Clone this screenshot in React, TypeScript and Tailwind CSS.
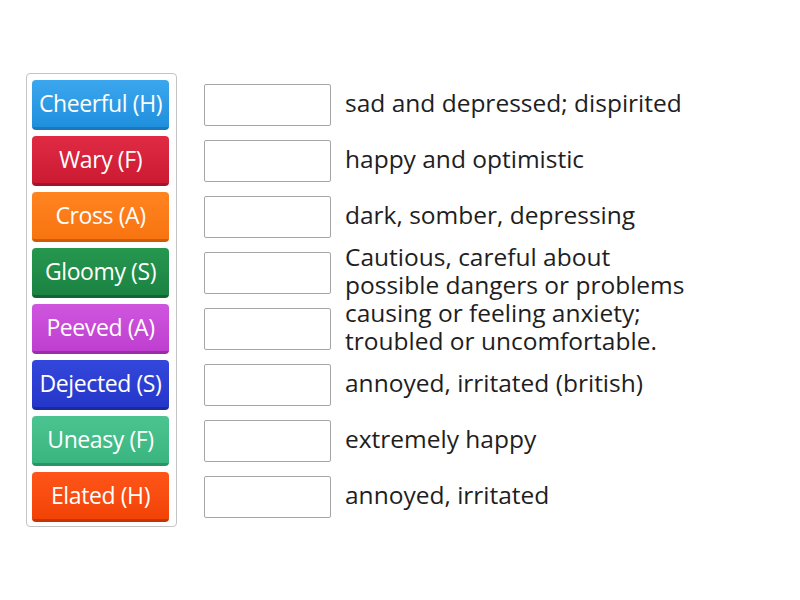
const cards = [
  { label: 'Cheerful (H)', cls: 'bg-gradient-to-b from-[#3ba7ee] to-[#1f8fdd] border-b-[#1a78bd]' },
  { label: 'Wary (F)', cls: 'bg-gradient-to-b from-[#e02a44] to-[#cc1a33] border-b-[#a3142a]' },
  { label: 'Cross (A)', cls: 'bg-gradient-to-b from-[#ff8420] to-[#f87410] border-b-[#cc5c08]' },
  { label: 'Gloomy (S)', cls: 'bg-gradient-to-b from-[#26974f] to-[#1b8342] border-b-[#136432]' },
  { label: 'Peeved (A)', cls: 'bg-gradient-to-b from-[#cf55de] to-[#bf3fd0] border-b-[#9a2ea9]' },
  { label: 'Dejected (S)', cls: 'bg-gradient-to-b from-[#3447dc] to-[#2537c9] border-b-[#1c2aa0]' },
  { label: 'Uneasy (F)', cls: 'bg-gradient-to-b from-[#4cc491] to-[#3ab580] border-b-[#2b9466]' },
  { label: 'Elated (H)', cls: 'bg-gradient-to-b from-[#ff5518] to-[#f24306] border-b-[#c43504]' },
]

const definitions = [
  'sad and depressed; dispirited',
  'happy and optimistic',
  'dark, somber, depressing',
  'Cautious, careful about possible dangers or problems',
  'causing or feeling anxiety; troubled or uncomfortable.',
  'annoyed, irritated (british)',
  'extremely happy',
  'annoyed, irritated',
]

export default function App() {
  return (
    <div className="w-[800px] h-[600px] bg-white pt-[73px] pl-[26px] flex items-start font-['Open_Sans',sans-serif]">
      <div className="w-[151px] border border-[#c4c4c4] rounded-[4px] pl-[5px] pt-[6px] pb-[4px] flex flex-col gap-[6px]">
        {cards.map((c) => (
          <div
            key={c.label}
            className={`w-[137px] h-[50px] rounded-[4px] border-b-[3px] flex items-center justify-center text-white text-[23px] font-medium tracking-[-0.4px] whitespace-nowrap ${c.cls}`}
          >
            {c.label}
          </div>
        ))}
      </div>

      <div className="ml-[27px] mt-[7px] flex flex-col gap-[6px]">
        {definitions.map((d) => (
          <div key={d} className="h-[50px] flex items-center">
            <div className="w-[127px] h-[42px] shrink-0 border border-[#a6a6a6] rounded-[2px] bg-white" />
            <div className="ml-[14px] w-[345px] text-[#1e1e1e] text-[24.5px] leading-[28px] -mt-[4px]">{d}</div>
          </div>
        ))}
      </div>
    </div>
  )
}
